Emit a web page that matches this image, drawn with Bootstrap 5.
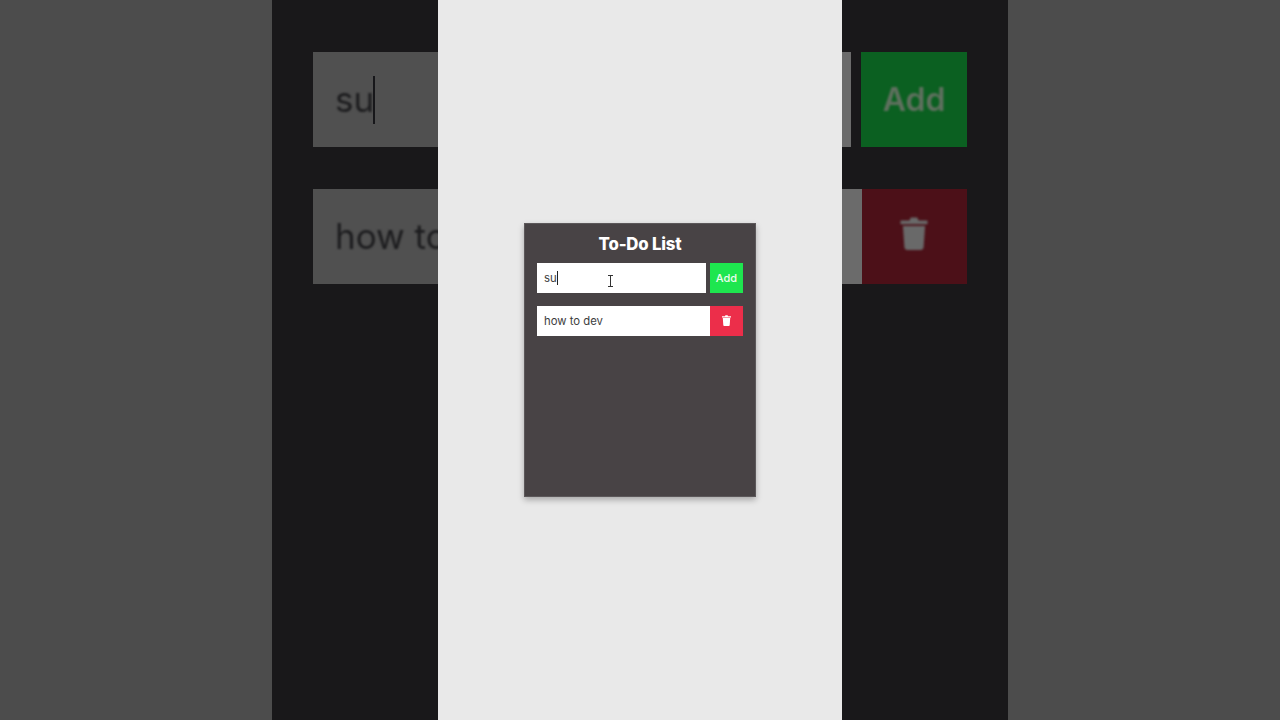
<!DOCTYPE html>
<html lang="en">
<head>
<meta charset="utf-8">
<title>To-Do List</title>
<link href="https://cdn.jsdelivr.net/npm/bootstrap@5.3.0/dist/css/bootstrap.min.css" rel="stylesheet">
<style>
html,body{height:720px;overflow:hidden;margin:0;}
body{font-family:"Inter","Liberation Sans",sans-serif;background:#4d4d4d;}
.stage{height:720px;}
.edge{flex:0 0 272px;background:#4c4c4c;}
.dark{flex:0 0 166px;background:#19181a;overflow:hidden;padding-top:52px;display:flex;flex-direction:column;gap:42px;}
.dark-l{padding-left:41px;}
.frag{height:95px;display:flex;align-items:center;background:#505050;color:#1c1c1e;font-size:35px;white-space:nowrap;overflow:hidden;}
.frag-l{padding-left:22px;}
.soft{filter:blur(1.1px);}
.caret-b{display:inline-block;width:2px;height:48px;background:#17171a;margin-left:-1px;filter:blur(.4px);}
.frag-r1{flex:0 0 9px;background:#6b6b6b;}
.frag-r2{flex:0 0 20px;background:#6b6b6b;}
.btn-big{flex:1;height:95px;display:flex;align-items:center;justify-content:center;}
.big-add{background:#0b6021;margin-left:10px;margin-right:41px;color:#60705f;font-size:32px;font-weight:600;flex:0 0 106px;}
.big-del{background:#4c1018;margin-right:41px;flex:0 0 105px;}
.big-del svg{margin-bottom:6px;margin-right:1px;}
.mid{flex:0 0 404px;background:#e9e9e9;}
.todo{width:232px;height:274px;background:#484345;padding:0 12px;border:1px solid #5c585a;box-shadow:0 3px 6px rgba(0,0,0,.28);}
.todo-title{font-size:16.8px;font-weight:800;color:#fff;line-height:20px;margin:10px 0 9px;letter-spacing:-.2px;}
.top-row{margin-bottom:13px;}
.entry{height:30px;background:#fff;display:flex;align-items:center;padding-left:7px;font-size:11.3px;color:#3d3d3d;position:relative;}
.type-caret{display:inline-block;width:1px;height:14px;background:#222;}
.ibeam{position:absolute;left:70px;top:12px;}
.add-btn{flex:0 0 33px;height:30px;background:#1ee64f;color:#eefcf0;font-size:11px;font-weight:500;border:0;border-radius:0;padding:0;}
.del-btn{flex:0 0 33px;height:30px;background:#ec2e4a;border:0;border-radius:0;padding:0 0 2px;}
</style>
</head>
<body>
<div class="stage d-flex">
  <div class="edge"></div>
  <div class="dark dark-l">
    <div class="frag frag-l"><span class="soft">su</span><span class="caret-b"></span></div>
    <div class="frag frag-l"><span class="soft">how to dev</span></div>
  </div>
  <div class="mid d-flex align-items-center justify-content-center">
    <div class="todo">
      <h1 class="todo-title text-center">To-Do List</h1>
      <div class="d-flex gap-1 top-row">
        <div class="entry flex-grow-1">su<span class="type-caret"></span>
          <svg class="ibeam" width="7" height="12" viewBox="0 0 7 12"><path d="M1 .5h5M3.500.5v11M1 11.500h5" stroke="#333" fill="none"/></svg>
        </div>
        <button class="btn add-btn" type="button">Add</button>
      </div>
      <div class="d-flex">
        <div class="entry flex-grow-1">how to dev</div>
        <button class="btn del-btn d-flex align-items-center justify-content-center" type="button" aria-label="Delete">
          <svg width="9" height="11" viewBox="0 0 9 11"><path d="M0 1.200h3L3.400.2h2.200L6 1.200h3v1.200H0zM.8 3h7.400l-.5 7.200q-.1.800-.9.800H2.200q-.8 0-.9-.8z" fill="#fff"/></svg>
        </button>
      </div>
    </div>
  </div>
  <div class="dark">
    <div class="d-flex">
      <div class="frag frag-r1"></div>
      <div class="btn-big big-add"><span class="soft">Add</span></div>
    </div>
    <div class="d-flex">
      <div class="frag frag-r2"></div>
      <div class="btn-big big-del">
        <svg class="soft" width="30" height="33" viewBox="0 0 9 11"><path d="M0 1.200h3L3.400.2h2.200L6 1.200h3v1.200H0zM.8 3h7.400l-.5 7.200q-.1.800-.9.800H2.200q-.8 0-.9-.8z" fill="#696969"/></svg>
      </div>
    </div>
  </div>
  <div class="edge"></div>
</div>
<script src="https://cdn.jsdelivr.net/npm/bootstrap@5.3.0/dist/js/bootstrap.bundle.min.js"></script>
</body>
</html>
